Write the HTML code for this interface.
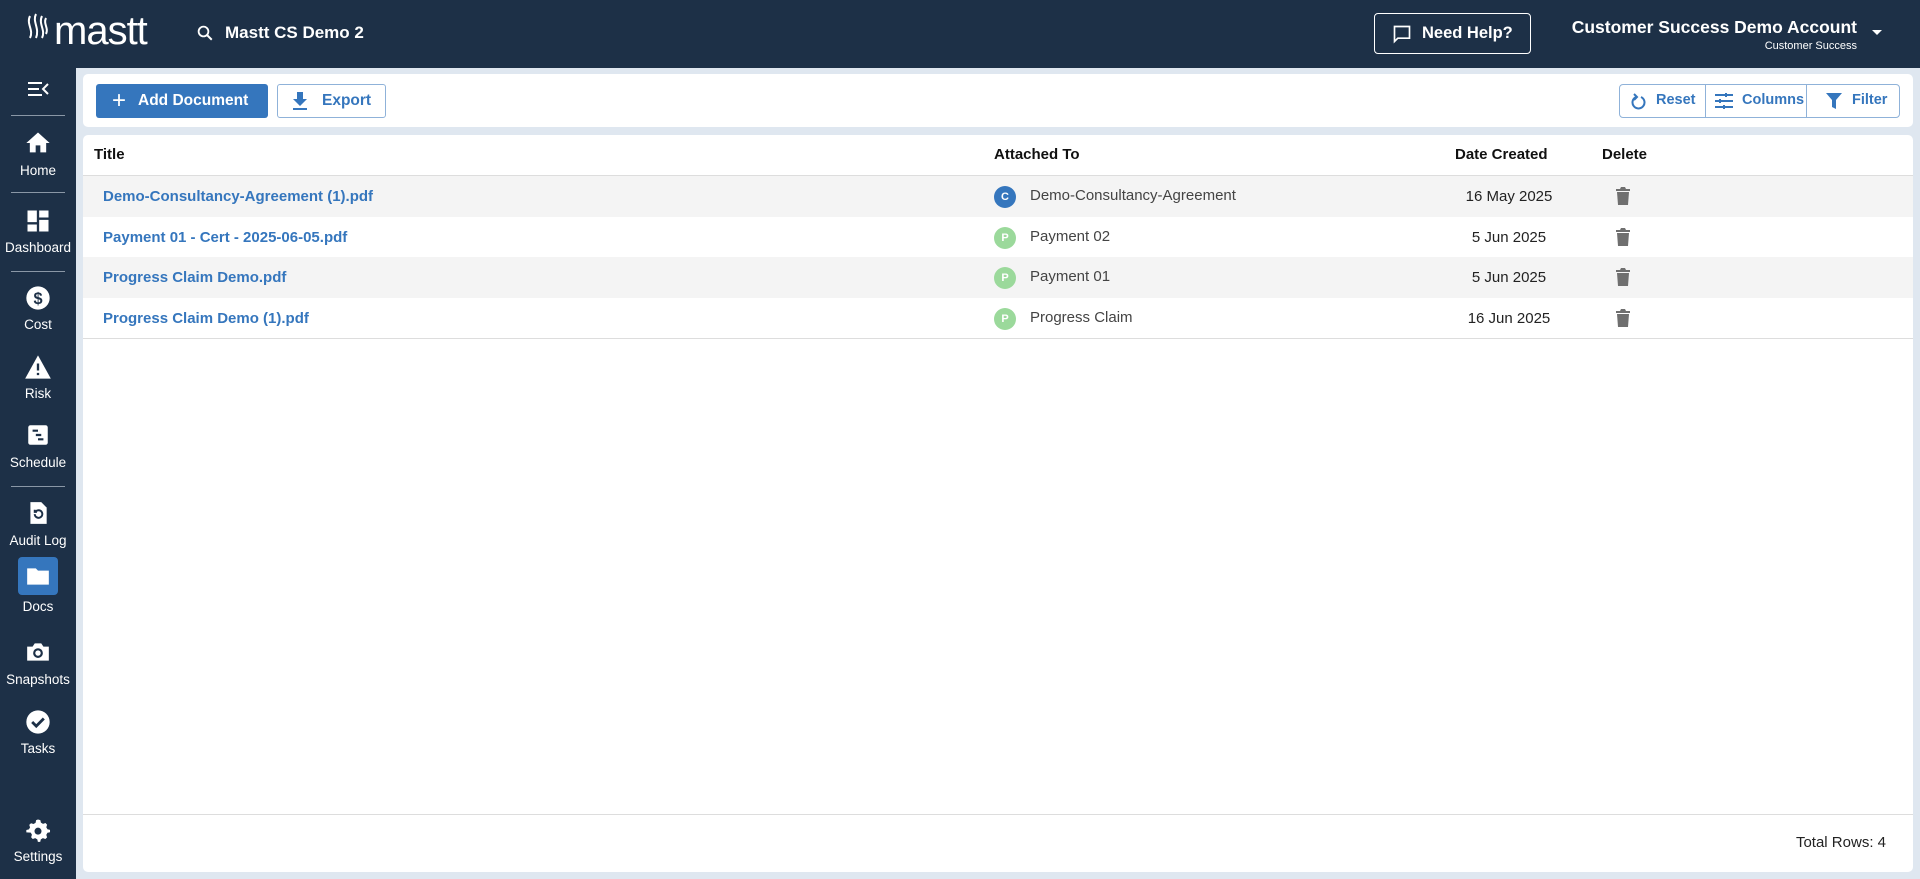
<!DOCTYPE html>
<html><head><meta charset="utf-8"><style>
*{box-sizing:border-box;margin:0;padding:0}
body{width:1920px;height:879px;overflow:hidden;background:#dfe7f0;font-family:"Liberation Sans",Arial,sans-serif;position:relative}
.hdr{position:absolute;left:0;top:0;width:1920px;height:68px;background:#1d3047;color:#fff}
.side{position:absolute;left:0;top:68px;width:76px;height:811px;background:#1d3047;color:#fff}
.abs{position:absolute}
.nav{position:absolute;left:0;width:76px;text-align:center;font-size:13.5px;color:#fff}
.nav svg{display:block;margin:0 auto}
.div{position:absolute;left:11px;width:54px;height:1px;background:#8a97a6}
.card{position:absolute;background:#fff;border-radius:5px}
.btn{position:absolute;font-size:15.5px;font-weight:bold;display:flex;align-items:center;border-radius:3px}
.row{position:absolute;left:0;width:1831px;height:40.5px;font-size:15px}
.row.g{background:#f4f4f4}
.t{position:absolute;left:20px;top:12px;color:#3576bd;font-weight:bold}
.chip{position:absolute;left:911px;top:10px;width:22px;height:22px;border-radius:50%;color:#fff;font-size:11px;text-align:center;line-height:22px;font-weight:bold}
.att{position:absolute;left:947px;top:11px;color:#444;font-size:15px}
.dt{position:absolute;left:1346px;width:160px;text-align:center;top:12px;color:#222;font-size:15px}
.tr{position:absolute;left:1533px;top:11px}
.hd{position:absolute;top:11px;font-size:15px;font-weight:bold;color:#111}
</style></head><body>
<div class="hdr">
 <svg class="abs" style="left:26px;top:12px" width="24" height="36" viewBox="0 0 24 36"><path d="M4 4c-4 8 4 14 0 22M10 2c-4 8 4 14 0 24M16 4c-4 8 4 14 0 22M20 6c-3 6 3 10 0 16" stroke="#fff" stroke-width="2" fill="none"/></svg>
 <div class="abs" style="left:54px;top:9px;font-size:40px;letter-spacing:-1px;line-height:44px">mastt</div>
 <svg class="abs" style="left:196px;top:24px" width="18" height="18" viewBox="0 0 24 24"><circle cx="10" cy="10" r="6.5" stroke="#fff" stroke-width="2.4" fill="none"/><path d="M15 15l6 6" stroke="#fff" stroke-width="2.6"/></svg>
 <div class="abs" style="left:225px;top:23px;font-size:17px;font-weight:bold">Mastt CS Demo 2</div>
 <div class="abs" style="left:1374px;top:13px;width:157px;height:41px;border:1px solid #fff;border-radius:4px"></div>
 <svg class="abs" style="left:1392px;top:24px" width="20" height="20" viewBox="0 0 24 24"><path d="M3 3h18v14H7l-4 4z" stroke="#fff" stroke-width="2" fill="none"/></svg>
 <div class="abs" style="left:1422px;top:24px;font-size:16.5px;font-weight:bold">Need Help?</div>
 <div class="abs" style="right:63px;top:17px;font-size:17.5px;font-weight:bold">Customer Success Demo Account</div>
 <div class="abs" style="right:63px;top:40px;font-size:11px">Customer Success</div>
 <div class="abs" style="left:1872px;top:30px;width:0;height:0;border-left:5px solid transparent;border-right:5px solid transparent;border-top:5px solid #fff"></div>
</div>
<div class="side">
 <svg class="abs" style="left:28px;top:13px" width="22" height="16" viewBox="0 0 22 16"><path d="M0 2h14M0 8h11M0 14h14M20 3l-5 5 5 5" stroke="#fff" stroke-width="2" fill="none"/></svg>
 <div class="div" style="top:47px"></div>
 <div class="nav" style="top:61px"><svg width="28" height="28" viewBox="0 0 24 24"><path d="M10 20v-6h4v6h5v-8h3L12 3 2 12h3v8z" fill="#fff"/></svg><div style="margin-top:6px">Home</div></div>
 <div class="div" style="top:124px"></div>
 <div class="nav" style="top:139px"><svg width="28" height="28" viewBox="0 0 24 24"><path d="M3 13h8V3H3zm0 8h8v-6H3zm10 0h8V11h-8zm0-18v6h8V3z" fill="#fff"/></svg><div style="margin-top:5px">Dashboard</div></div>
 <div class="div" style="top:203px"></div>
 <div class="nav" style="top:216px"><svg width="28" height="28" viewBox="0 0 24 24"><circle cx="12" cy="12" r="10" fill="#fff"/><text x="12" y="17" font-size="14" font-weight="bold" text-anchor="middle" fill="#1d3047" font-family="Liberation Sans">$</text></svg><div style="margin-top:5px">Cost</div></div>
 <div class="nav" style="top:286px"><svg width="28" height="26" viewBox="0 0 24 22"><path d="M12 1L1 21h22z" fill="#fff"/><path d="M12 8v6M12 16v2" stroke="#1d3047" stroke-width="2"/></svg><div style="margin-top:6px">Risk</div></div>
 <div class="nav" style="top:354px"><svg width="26" height="26" viewBox="0 0 24 24"><rect x="3" y="3" width="18" height="18" rx="2" fill="#fff"/><path d="M7 8h5M10 12h5M12 16h5" stroke="#1d3047" stroke-width="2"/></svg><div style="margin-top:7px">Schedule</div></div>
 <div class="div" style="top:418px"></div>
 <div class="nav" style="top:432px"><svg width="26" height="26" viewBox="0 0 24 24"><path d="M5 2h10l5 5v15H5z" fill="#fff"/><path d="M9 13a3.5 3.5 0 1 0 1-2.5M9 9v2h2" stroke="#1d3047" stroke-width="1.8" fill="none"/></svg><div style="margin-top:7px">Audit Log</div></div>
 <div class="abs" style="left:18px;top:489px;width:40px;height:38px;background:#3576bd;border-radius:4px"></div>
 <svg class="abs" style="left:25px;top:495px" width="26" height="26" viewBox="0 0 24 24"><path d="M2 5h8l2 2h10v13H2z" fill="#fff"/></svg>
 <div class="nav" style="top:531px">Docs</div>
 <div class="nav" style="top:571px"><svg width="26" height="26" viewBox="0 0 24 24"><path d="M2 7h5l2-3h6l2 3h5v13H2z" fill="#fff"/><circle cx="12" cy="13" r="3.5" fill="none" stroke="#1d3047" stroke-width="2"/></svg><div style="margin-top:7px">Snapshots</div></div>
 <div class="nav" style="top:640px"><svg width="28" height="28" viewBox="0 0 24 24"><circle cx="12" cy="12" r="10" fill="#fff"/><path d="M7 12l3.5 3.5L17 9" stroke="#1d3047" stroke-width="2.4" fill="none"/></svg><div style="margin-top:5px">Tasks</div></div>
 <div class="nav" style="top:748px"><svg width="28" height="28" viewBox="0 0 24 24"><path d="M12 3l2 .5.5 2.2 1.8 1 2.1-.7 1.4 1.5-.7 2.1 1 1.8 2.2.5v2l-2.2.5-1 1.8.7 2.1-1.5 1.4-2.1-.7-1.8 1-.5 2.2h-2l-.5-2.2-1.8-1-2.1.7-1.4-1.5.7-2.1-1-1.8L2 14v-2l2.2-.5 1-1.8-.7-2.1L6 6.2l2.1.7 1.8-1L10.4 3.5z" fill="#fff"/><circle cx="12" cy="13" r="3" fill="#1d3047"/></svg><div style="margin-top:5px">Settings</div></div>
</div>
<div class="card" style="left:83px;top:74px;width:1830px;height:53px"></div>
<div class="btn" style="left:96px;top:84px;width:172px;height:34px;background:#3576bd;color:#fff"><span style="font-size:24px;font-weight:normal;margin:0 12px 0 16px;line-height:1">+</span>Add Document</div>
<div class="btn" style="left:277px;top:84px;width:109px;height:34px;border:1px solid #8fb2d9;color:#3576bd"><svg style="margin:0 14px 0 14px" width="16" height="18" viewBox="0 0 16 18"><path d="M5 0h6v7h4L8 14 1 7h4zM1 16h14v2H1z" fill="#3576bd"/></svg>Export</div>
<div class="abs" style="left:1619px;top:84px;width:281px;height:34px;border:1px solid #8fb2d9;border-radius:4px"></div>
<div class="abs" style="left:1705px;top:85px;width:1px;height:32px;background:#8fb2d9"></div>
<div class="abs" style="left:1806px;top:85px;width:1px;height:32px;background:#8fb2d9"></div>
<svg class="abs" style="left:1631px;top:93px" width="16" height="18" viewBox="0 0 16 18"><path d="M5 4a6 6 0 1 0 5 0" stroke="#3576bd" stroke-width="2" fill="none"/><path d="M3 1l3 3-3 3" stroke="#3576bd" stroke-width="2" fill="none"/></svg>
<div class="abs" style="left:1656px;top:92px;font-size:14.5px;font-weight:bold;color:#3576bd">Reset</div>
<svg class="abs" style="left:1715px;top:92px" width="18" height="18" viewBox="0 0 18 18"><path d="M0 3h18M0 9h18M0 15h18M11 1v4M5 7v4M9 13v4" stroke="#3576bd" stroke-width="2"/></svg>
<div class="abs" style="left:1742px;top:92px;font-size:14.5px;font-weight:bold;color:#3576bd">Columns</div>
<svg class="abs" style="left:1826px;top:93px" width="16" height="16" viewBox="0 0 16 16"><path d="M0 0h16L10 7v9l-4-2V7z" fill="#3576bd"/></svg>
<div class="abs" style="left:1852px;top:92px;font-size:14.5px;font-weight:bold;color:#3576bd">Filter</div>
<div class="card" style="left:83px;top:135px;width:1830px;height:737px;overflow:hidden">
 <div class="hd" style="left:11px">Title</div>
 <div class="hd" style="left:911px">Attached To</div>
 <div class="hd" style="left:1372px">Date Created</div>
 <div class="hd" style="left:1519px">Delete</div>
 <div class="abs" style="left:0;top:40px;width:1830px;height:1px;background:#ddd"></div>
 <div class="row g" style="top:41px"><div class="t">Demo-Consultancy-Agreement (1).pdf</div><div class="chip" style="background:#3576bd">C</div><div class="att">Demo-Consultancy-Agreement</div><div class="dt">16 May 2025</div><svg class="tr" width="14" height="18" viewBox="0 0 14 18"><path d="M1 5h12l-1 13H2zM0 2h4l1-2h4l1 2h4v2H0z" fill="#6f6f6f"/></svg></div>
 <div class="row" style="top:81.5px"><div class="t">Payment 01 - Cert - 2025-06-05.pdf</div><div class="chip" style="background:#9bd99b">P</div><div class="att">Payment 02</div><div class="dt">5 Jun 2025</div><svg class="tr" width="14" height="18" viewBox="0 0 14 18"><path d="M1 5h12l-1 13H2zM0 2h4l1-2h4l1 2h4v2H0z" fill="#6f6f6f"/></svg></div>
 <div class="row g" style="top:122px"><div class="t">Progress Claim Demo.pdf</div><div class="chip" style="background:#9bd99b">P</div><div class="att">Payment 01</div><div class="dt">5 Jun 2025</div><svg class="tr" width="14" height="18" viewBox="0 0 14 18"><path d="M1 5h12l-1 13H2zM0 2h4l1-2h4l1 2h4v2H0z" fill="#6f6f6f"/></svg></div>
 <div class="row" style="top:162.5px"><div class="t">Progress Claim Demo (1).pdf</div><div class="chip" style="background:#9bd99b">P</div><div class="att">Progress Claim</div><div class="dt">16 Jun 2025</div><svg class="tr" width="14" height="18" viewBox="0 0 14 18"><path d="M1 5h12l-1 13H2zM0 2h4l1-2h4l1 2h4v2H0z" fill="#6f6f6f"/></svg></div>
 <div class="abs" style="left:0;top:203px;width:1830px;height:1px;background:#ddd"></div>
 <div class="abs" style="left:0;top:679px;width:1830px;height:1px;background:#ddd"></div>
 <div class="abs" style="right:27px;top:699px;font-size:15px;color:#222">Total Rows: 4</div>
</div>
</body></html>
